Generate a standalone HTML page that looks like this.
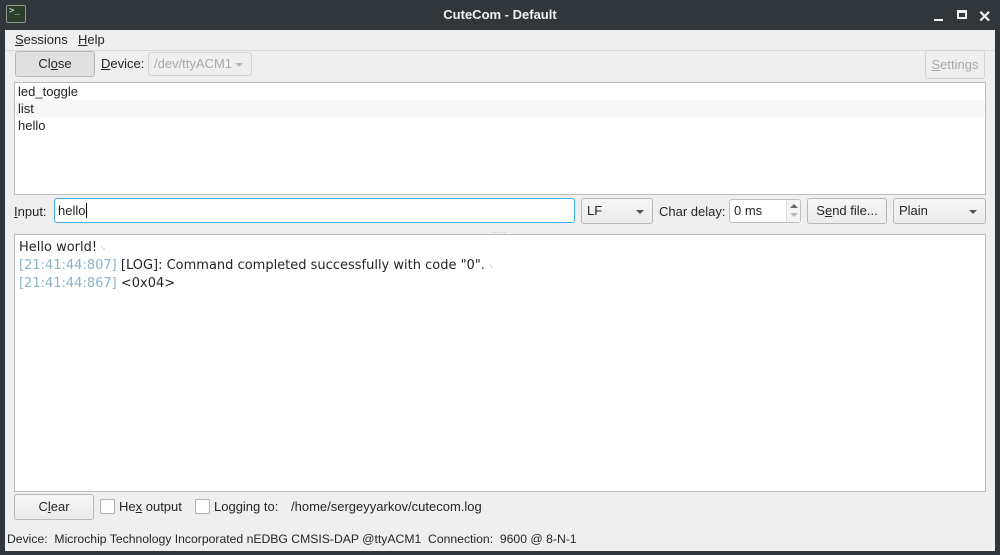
<!DOCTYPE html>
<html><head><meta charset="utf-8"><style>
*{box-sizing:border-box;margin:0;padding:0}
body{width:1000px;height:555px;background:#31363b;font-family:"Liberation Sans",sans-serif;font-size:13px;color:#232627;position:relative;overflow:hidden}
.a{position:absolute}
.win{left:5px;top:30px;width:990px;height:521px;background:#efefef}
.btn{position:absolute;border:1px solid #b7b8b9;border-radius:3px;background:linear-gradient(#f6f6f6,#ebebeb);text-align:center;line-height:24px;height:26px}
.cb{position:absolute;border:1px solid #b7b8b9;border-radius:3px;background:linear-gradient(#f6f6f6,#ebebeb);height:26px;line-height:24px;padding-left:5px}
.arr{position:absolute;right:8px;top:11px;width:0;height:0;border-left:4px solid transparent;border-right:4px solid transparent;border-top:4px solid #555}
.box{position:absolute;background:#fff;border:1px solid #bcbebf}
u{text-decoration:underline}
.mono{font-family:"DejaVu Sans",sans-serif;font-size:13px}
.ts{color:#8ab4c8}
.chk{position:absolute;width:15px;height:15px;border:1px solid #b0b2b3;background:#fff;border-radius:2px}
</style></head><body>
<div class="a" style="left:6px;top:5px;width:20px;height:18px;background:#2f3d2c;border:1px solid #8a9a8a;border-radius:2px"><div style="color:#cfd;font-size:9px;line-height:10px;padding-left:2px;font-family:'DejaVu Sans Mono',monospace">&gt;_</div></div>
<div class="a" style="left:0;top:7px;width:1000px;text-align:center;color:#eff0f1;font-weight:bold;font-size:13px">CuteCom - Default</div>
<div class="a" style="left:934px;top:19px;width:9px;height:2px;background:#eee"></div>
<div class="a" style="left:957px;top:10px;width:10px;height:9px;border:2px solid #eee;border-top-width:3px"></div>
<div class="a" style="left:978px;top:7px;color:#eee;font-size:16px;font-weight:bold">✕</div>
<div class="a win"></div>
<div class="a" style="left:15px;top:32px"><u>S</u>essions</div>
<div class="a" style="left:78px;top:32px"><u>H</u>elp</div>
<div class="a" style="left:5px;top:50px;width:990px;height:1px;background:#dadada"></div>
<div class="btn" style="left:15px;top:51px;width:80px;background:#e0e0e0">Cl<u>o</u>se</div>
<div class="a" style="left:101px;top:56px"><u>D</u>evice:</div>
<div class="cb" style="left:148px;top:52px;width:104px;height:24px;line-height:22px;color:#a8a9aa;background:#efefef;border-color:#d3d4d5">/dev/ttyACM1<div class="arr" style="border-top-color:#bbb;top:10px"></div></div>
<div class="btn" style="left:925px;top:50px;width:60px;color:#a8a9aa;border-color:#d3d4d5;background:#efefef;height:29px;line-height:27px"><u>S</u>ettings</div>
<div class="box" style="left:14px;top:82px;width:972px;height:113px">
<div style="height:17px;padding-left:3px;line-height:17px">led_toggle</div>
<div style="height:17px;padding-left:3px;line-height:17px;background:#f7f7f7">list</div>
<div style="height:17px;padding-left:3px;line-height:17px">hello</div>
</div>
<div class="a" style="left:14px;top:204px"><u>I</u>nput:</div>
<div class="box" style="left:54px;top:198px;width:521px;height:25px;border-color:#3daee9;border-radius:3px;padding-left:3px;line-height:23px">hello<span style="border-left:1px solid #000;margin-left:1px"></span></div>
<div class="cb" style="left:581px;top:198px;width:72px">LF<div class="arr"></div></div>
<div class="a" style="left:659px;top:204px">Char delay:</div>
<div class="box" style="left:729px;top:199px;width:72px;height:24px;border-radius:3px;padding-left:4px;line-height:22px">0 ms<div class="a" style="right:0;top:0;width:14px;height:22px;border-left:1px solid #ddd;background:#f4f4f4"><div class="a" style="left:3px;top:4px;border-left:4px solid transparent;border-right:4px solid transparent;border-bottom:4px solid #666"></div><div class="a" style="left:3px;top:13px;border-left:4px solid transparent;border-right:4px solid transparent;border-top:4px solid #bbb"></div></div></div>
<div class="btn" style="left:807px;top:198px;width:80px">S<u>e</u>nd file...</div>
<div class="cb" style="left:893px;top:198px;width:93px">Plain<div class="arr"></div></div>
<div class="a" style="left:492px;top:226px;color:#bbb;font-size:8px">......</div>
<div class="box mono" style="left:14px;top:234px;width:972px;height:258px;padding:4px 0 0 4px;line-height:17px">
<div>Hello world!<span style="color:#aaa;font-size:8px"> ␍</span></div>
<div><span class="ts">[21:41:44:807]</span> [LOG]: Command completed successfully with code "0".<span style="color:#aaa;font-size:8px"> ␍</span></div>
<div><span class="ts">[21:41:44:867]</span> &lt;0x04&gt;</div>
</div>
<div class="btn" style="left:14px;top:494px;width:80px">C<u>l</u>ear</div>
<div class="chk" style="left:100px;top:499px"></div>
<div class="a" style="left:119px;top:499px">He<u>x</u> output</div>
<div class="chk" style="left:195px;top:499px"></div>
<div class="a" style="left:214px;top:499px">Logging to:</div>
<div class="a" style="left:291px;top:499px">/home/sergeyyarkov/cutecom.log</div>
<div class="a" style="left:7px;top:532px;font-size:12.2px">Device:&nbsp; Microchip Technology Incorporated nEDBG CMSIS-DAP @ttyACM1&nbsp; Connection:&nbsp; 9600 @ 8-N-1</div>
</body></html>
